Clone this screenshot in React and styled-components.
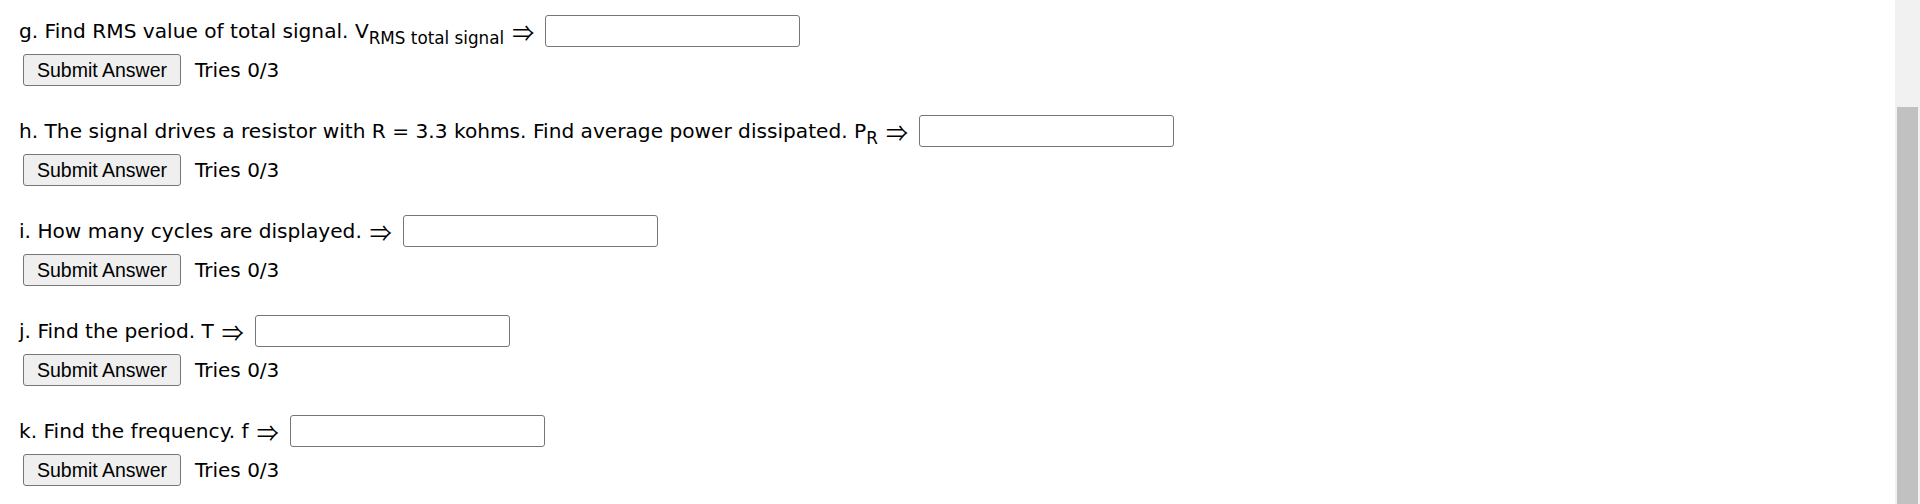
import React from "react";
import styled, { createGlobalStyle } from "styled-components";

const questions = [
  { id: "g", text: "g. Find RMS value of total signal. V", sub: "RMS total signal" },
  {
    id: "h",
    text: "h. The signal drives a resistor with R = 3.3 kohms. Find average power dissipated. P",
    sub: "R",
  },
  { id: "i", text: "i. How many cycles are displayed." },
  { id: "j", text: "j. Find the period. T" },
  { id: "k", text: "k. Find the frequency. f" },
];

export default function App() {
  return (
    <>
      <GlobalStyle />
      <Page>
        <Main>
          {questions.map((q) => (
            <Block key={q.id}>
              <Prompt>
                <Label>
                  {q.text}
                  {q.sub && <Sub>{q.sub}</Sub>}
                </Label>
                <Arrow>⇒</Arrow>
                <AnswerInput type="text" />
              </Prompt>
              <Actions>
                <SubmitButton>Submit Answer</SubmitButton>
                <Tries>Tries 0/3</Tries>
              </Actions>
            </Block>
          ))}
        </Main>
        <Scrollbar>
          <Thumb />
        </Scrollbar>
      </Page>
    </>
  );
}

const GlobalStyle = createGlobalStyle`
  html, body {
    margin: 0;
    padding: 0;
    background: #fff;
  }

  body {
    font-family: "DejaVu Sans", Verdana, sans-serif;
    color: #000;
  }
`;

const Page = styled.div`
  display: flex;
  height: 504px;
  overflow: hidden;
`;

const Main = styled.div`
  flex: 1;
  display: flex;
  flex-direction: column;
  gap: 29px;
  padding: 15px 0 0 19px;
`;

const Block = styled.div`
  display: flex;
  flex-direction: column;
  gap: 7px;
`;

const Prompt = styled.div`
  display: flex;
  align-items: center;
  height: 32px;
`;

const Label = styled.span`
  font-size: 20.15px;
  line-height: 32px;
  white-space: pre;
`;

const Sub = styled.span`
  font-size: 16.8px;
  line-height: 0;
  vertical-align: -6px;
`;

const Arrow = styled.span`
  font-family: "Noto Sans CJK JP", "DejaVu Sans", sans-serif;
  font-size: 22px;
  line-height: 32px;
  margin-left: 8px;
`;

const AnswerInput = styled.input`
  box-sizing: border-box;
  width: 255px;
  height: 32px;
  margin: 0 0 0 11px;
  padding: 0 4px;
  border: 1px solid #767676;
  border-radius: 3px;
  background: #fff;
  font-size: 16px;
`;

const Actions = styled.div`
  display: flex;
  align-items: center;
  height: 32px;
`;

const SubmitButton = styled.button`
  box-sizing: border-box;
  width: 158px;
  height: 32px;
  margin: 0 0 0 4px;
  padding: 0;
  border: 1px solid #767676;
  border-radius: 3px;
  background: #efefef;
  color: #000;
  font-family: "Liberation Sans", Arial, sans-serif;
  font-size: 19.5px;
`;

const Tries = styled.span`
  margin-left: 14px;
  font-size: 20px;
`;

const Scrollbar = styled.div`
  width: 25px;
  display: flex;
  flex-direction: column;
  padding: 107px 2px 0;
  box-sizing: border-box;
  background: #f1f1f1;
`;

const Thumb = styled.div`
  flex: 1;
  background: #c1c1c1;
`;
